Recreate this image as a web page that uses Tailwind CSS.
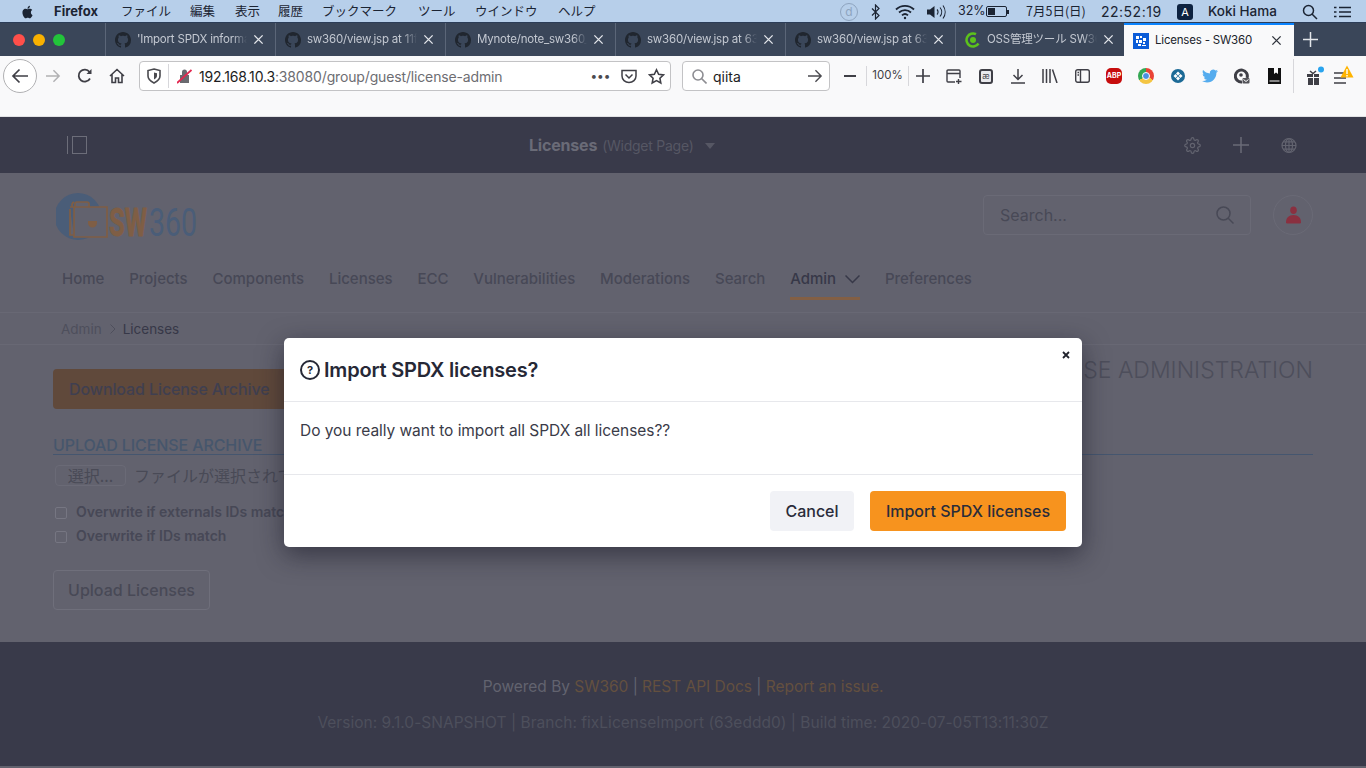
<!DOCTYPE html>
<html lang="ja">
  <head>
    <meta charset="UTF-8" />
    <title>Licenses - SW360</title>
    <script src="https://cdn.jsdelivr.net/npm/@tailwindcss/browser@4"></script>
  </head>
  <body class="bg-[#62626e]">
    <svg class="hidden">
      <symbol id="gh" viewBox="0 0 16 16"><path fill="currentColor" d="M8 0C3.58 0 0 3.58 0 8c0 3.54 2.29 6.53 5.47 7.59.4.07.55-.17.55-.38 0-.19-.01-.82-.01-1.49-2.01.37-2.53-.49-2.69-.94-.09-.23-.48-.94-.82-1.13-.28-.15-.68-.52-.01-.53.63-.01 1.08.58 1.23.82.72 1.21 1.87.87 2.33.66.07-.52.28-.87.51-1.07-1.78-.2-3.64-.89-3.64-3.95 0-.87.31-1.59.82-2.15-.08-.2-.36-1.02.08-2.12 0 0 .67-.21 2.2.82.64-.18 1.32-.27 2-.27.68 0 1.36.09 2 .27 1.53-1.04 2.2-.82 2.2-.82.44 1.1.16 1.92.08 2.12.51.56.82 1.27.82 2.15 0 3.07-1.87 3.75-3.65 3.95.29.25.54.73.54 1.48 0 1.07-.01 1.93-.01 2.2 0 .21.15.46.55.38A8.013 8.013 0 0016 8c0-4.42-3.58-8-8-8z"/></symbol>
      <symbol id="x" viewBox="0 0 12 12"><path d="M1.5 1.5l9 9M10.5 1.5l-9 9" stroke="currentColor" stroke-width="1.5" fill="none"/></symbol>
    </svg>

    <div class="relative w-[1366px] h-[768px] overflow-hidden flex flex-col [font-family:Inter,sans-serif]">
      <!-- mac menu bar -->
      <div class="h-[23px] shrink-0 pt-px bg-[#b7cfea] border-b border-[#2c3d58] flex items-center text-[#1b2433] text-[12.5px] [font-family:'Noto_Sans_CJK_JP',sans-serif]">
        <svg class="ml-[20px] w-[15px] h-[16px] text-[#1b2433]" viewBox="0 0 24 24"><path fill="currentColor" d="M18.71 19.5c-.83 1.24-1.71 2.45-3.05 2.47-1.34.03-1.77-.79-3.29-.79-1.53 0-2 .77-3.27.82-1.31.05-2.3-1.32-3.14-2.53C4.25 17 2.94 12.45 4.7 9.39c.87-1.52 2.43-2.48 4.12-2.51 1.28-.02 2.5.87 3.29.87.78 0 2.26-1.07 3.81-.91.65.03 2.47.26 3.64 1.98-.09.06-2.17 1.28-2.15 3.81.03 3.02 2.65 4.03 2.68 4.04-.03.07-.42 1.44-1.38 2.83M13 3.5c.73-.83 1.94-1.46 2.94-1.5.13 1.17-.34 2.35-1.04 3.19-.69.85-1.83 1.51-2.95 1.42-.15-1.15.41-2.35 1.05-3.11z"/></svg>
        <span class="ml-[19px] w-[67px] font-bold text-[13px] [font-family:Inter,sans-serif]">Firefox</span>
        <span class="w-[69px]">ファイル</span>
        <span class="w-[45px]">編集</span>
        <span class="w-[43px]">表示</span>
        <span class="w-[44px]">履歴</span>
        <span class="w-[96px]">ブックマーク</span>
        <span class="w-[57px]">ツール</span>
        <span class="w-[83px]">ウインドウ</span>
        <span class="w-[60px]">ヘルプ</span>
        <div class="ml-[222px] w-[18px] h-[18px] rounded-full border border-[#8ea4bf] text-[#8ea4bf] text-[12px] leading-[15px] text-center [font-family:Inter,sans-serif]">d</div>
        <svg class="ml-[13px] w-[10px] h-[16px]" viewBox="0 0 10 16"><path d="M1 4.5l7 7-3.5 3.5V1L8 4.5l-7 7" fill="none" stroke="#1b2433" stroke-width="1.2"/></svg>
        <svg class="ml-[14px] w-[20px] h-[16px]" viewBox="0 0 20 16" fill="none" stroke="#1b2433" stroke-width="1.8"><path d="M1 5.5a13 13 0 0118 0M4 8.5a9 9 0 0112 0M7 11.3a4.5 4.5 0 016 0"/><circle cx="10" cy="14" r="1.2" fill="#1b2433" stroke="none"/></svg>
        <svg class="ml-[11px] w-[21px] h-[16px]" viewBox="0 0 21 16" fill="none" stroke="#1b2433" stroke-width="1.1"><path d="M1 5.5h3L8.5 2v12L4 10.5H1z" fill="#1b2433" stroke="none"/><path d="M11 5.5a3.5 3.5 0 010 5M14 3.5a7 7 0 010 9M17 1.5a11 11 0 010 13"/></svg>
        <span class="ml-[11px] w-[28px] text-[12.5px] [font-family:Inter,sans-serif]">32%</span>
        <div class="w-[21px] h-[11px] border border-[#1b2433] rounded-[2px] p-px"><div class="w-[7px] h-full bg-[#1b2433]"></div></div>
        <div class="w-[2px] h-[4px] bg-[#1b2433]"></div>
        <span class="ml-[17px] w-[75px] whitespace-nowrap">7月5日(日)</span>
        <span class="w-[76px] text-[14px] tracking-[0.5px] whitespace-nowrap [font-family:Inter,sans-serif]">22:52:19</span>
        <div class="w-[16px] h-[16px] rounded-[3px] bg-[#0d2240] text-white text-[11px] leading-[16px] text-center [font-family:Inter,sans-serif]">A</div>
        <span class="ml-[15px] w-[84px] text-[13.5px] font-medium whitespace-nowrap [font-family:Inter,sans-serif]">Koki Hama</span>
        <svg class="ml-[10px] w-[16px] h-[16px]" viewBox="0 0 16 16" fill="none" stroke="#1b2433" stroke-width="1.5"><circle cx="6.5" cy="6.5" r="5"/><path d="M10 10l5 5"/></svg>
        <svg class="ml-[16px] w-[17px] h-[12px]" viewBox="0 0 17 12" stroke="#1b2433" stroke-width="1.6"><path d="M0 1.5h2.5M0 6h2.5M0 10.5h2.5M5 1.5h12M5 6h12M5 10.5h12"/></svg>
      </div>

      <!-- tab strip -->
      <div class="h-[33px] shrink-0 bg-[#3a4659] flex text-[11.5px] tracking-[-0.2px] text-[#c3c8d1]">
        <div class="w-[105px] flex items-center gap-[8px] pl-[13px] rounded-tl-[5px]">
          <span class="w-[12px] h-[12px] rounded-full bg-[#ff4f4a]"></span>
          <span class="w-[12px] h-[12px] rounded-full bg-[#f9b100]"></span>
          <span class="w-[12px] h-[12px] rounded-full bg-[#22c43a]"></span>
        </div>
        <div class="w-[170px] border-l border-[#5b6678] flex items-center pl-[9px]">
          <svg class="w-[16px] h-[16px] text-[#20262f]"><use href="#gh" /></svg>
          <span class="ml-[6px] pt-px w-[110px] overflow-hidden whitespace-nowrap [mask-image:linear-gradient(to_left,transparent,black_14px)]">'Import SPDX information</span>
          <svg class="ml-[6px] w-[11px] h-[11px] text-[#e3e6ea]"><use href="#x" /></svg>
        </div>
        <div class="w-[170px] border-l border-[#5b6678] flex items-center pl-[9px]">
          <svg class="w-[16px] h-[16px] text-[#20262f]"><use href="#gh" /></svg>
          <span class="ml-[6px] pt-px w-[110px] overflow-hidden whitespace-nowrap [mask-image:linear-gradient(to_left,transparent,black_14px)]">sw360/view.jsp at 11fa2</span>
          <svg class="ml-[6px] w-[11px] h-[11px] text-[#e3e6ea]"><use href="#x" /></svg>
        </div>
        <div class="w-[170px] border-l border-[#5b6678] flex items-center pl-[9px]">
          <svg class="w-[16px] h-[16px] text-[#20262f]"><use href="#gh" /></svg>
          <span class="ml-[6px] pt-px w-[110px] overflow-hidden whitespace-nowrap [mask-image:linear-gradient(to_left,transparent,black_14px)]">Mynote/note_sw360_import</span>
          <svg class="ml-[6px] w-[11px] h-[11px] text-[#e3e6ea]"><use href="#x" /></svg>
        </div>
        <div class="w-[170px] border-l border-[#5b6678] flex items-center pl-[9px]">
          <svg class="w-[16px] h-[16px] text-[#20262f]"><use href="#gh" /></svg>
          <span class="ml-[6px] pt-px w-[110px] overflow-hidden whitespace-nowrap [mask-image:linear-gradient(to_left,transparent,black_14px)]">sw360/view.jsp at 63eddd0</span>
          <svg class="ml-[6px] w-[11px] h-[11px] text-[#e3e6ea]"><use href="#x" /></svg>
        </div>
        <div class="w-[170px] border-l border-[#5b6678] flex items-center pl-[9px]">
          <svg class="w-[16px] h-[16px] text-[#20262f]"><use href="#gh" /></svg>
          <span class="ml-[6px] pt-px w-[110px] overflow-hidden whitespace-nowrap [mask-image:linear-gradient(to_left,transparent,black_14px)]">sw360/view.jsp at 63eddd0</span>
          <svg class="ml-[6px] w-[11px] h-[11px] text-[#e3e6ea]"><use href="#x" /></svg>
        </div>
        <div class="w-[169px] border-l border-[#5b6678] flex items-center pl-[9px]">
          <svg class="w-[16px] h-[16px]" viewBox="0 0 16 16" fill="none"><path d="M13.5 11.5A6.5 6.5 0 1111 2.2" stroke="#5cc21c" stroke-width="2.5"/><circle cx="8" cy="8" r="3" fill="#5cc21c"/></svg>
          <span class="ml-[6px] w-[110px] overflow-hidden whitespace-nowrap [font-family:Inter,'Noto_Sans_CJK_JP',sans-serif] [mask-image:linear-gradient(to_left,transparent,black_14px)]">OSS管理ツール SW360とは</span>
          <svg class="ml-[6px] w-[11px] h-[11px] text-[#e3e6ea]"><use href="#x" /></svg>
        </div>
        <div class="w-[170px] bg-[#f9f9fa] border-t-2 border-[#0a84ff] flex items-center pl-[9px] text-[#20232b]">
          <svg class="w-[16px] h-[16px]" viewBox="0 0 16 16"><rect width="16" height="16" fill="#0b5cd8"/><path d="M3 3h3v3H3zM7 3h2v2H7zM10 5h3v3h-3zM3 7h2v3H3zM6 7h3v3H6zM10 9h2v2h-2zM5 11h3v2H5zM9 12h4v1H9z" fill="#fff"/></svg>
          <span class="ml-[6px] w-[110px] whitespace-nowrap">Licenses - SW360</span>
          <svg class="ml-[6px] w-[11px] h-[11px] text-[#30343c]"><use href="#x" /></svg>
        </div>
        <div class="w-[32px] flex items-center justify-center">
          <svg class="w-[15px] h-[15px]" viewBox="0 0 15 15"><path d="M7.5 0v15M0 7.5h15" stroke="#e3e6ea" stroke-width="1.5"/></svg>
        </div>
      </div>

      <!-- toolbar -->
      <div class="h-[61px] shrink-0 bg-[#f9f9fa] border-b border-[#e2e2e4] text-[#3f3f46]">
        <div class="h-[40px] flex items-center">
          <div class="ml-[3px] w-[34px] h-[34px] rounded-full bg-white border border-[#b1b1b3] flex items-center justify-center">
            <svg class="w-[18px] h-[16px]" viewBox="0 0 18 16" fill="none" stroke="#3f3f46" stroke-width="1.7"><path d="M17 8H2M8.5 1.5L2 8l6.5 6.5"/></svg>
          </div>
          <div class="w-[32px] flex justify-center">
            <svg class="w-[16px] h-[14px]" viewBox="0 0 18 16" fill="none" stroke="#b1b1b3" stroke-width="1.7"><path d="M1 8h15M9.5 1.5L16 8l-6.5 6.5"/></svg>
          </div>
          <div class="w-[32px] flex justify-center">
            <svg class="w-[16px] h-[16px]" viewBox="0 0 16 16" fill="none" stroke="#3f3f46" stroke-width="1.8"><path d="M13 10.5A6 6 0 1112.5 4"/><path d="M14.5 1v5h-5" fill="#3f3f46" stroke="none"/></svg>
          </div>
          <div class="w-[32px] flex justify-center">
            <svg class="w-[16px] h-[16px]" viewBox="0 0 16 16" fill="none" stroke="#3f3f46" stroke-width="1.6"><path d="M1 8l7-6.5L15 8M3 6.5V14.5h3.5V10h3v4.5H13V6.5"/></svg>
          </div>
          <div class="ml-[6px] w-[532px] h-[30px] bg-white border border-[#c3c3c5] rounded-[4px] flex items-center text-[14px] tracking-[-0.15px]">
            <svg class="ml-[7px] w-[14px] h-[16px]" viewBox="0 0 14 16" fill="none" stroke="#4a4a4f" stroke-width="1.6"><path d="M7 1l6 1.5V8c0 3-3 5.5-6 7-3-1.5-6-4-6-7V2.5z"/><path d="M7 4.5l3 .8V8c0 1.5-1.5 2.8-3 3.5z" fill="#4a4a4f" stroke="none"/></svg>
            <div class="ml-[7px] w-px h-[24px] bg-[#d7d7db]"></div>
            <svg class="ml-[8px] w-[15px] h-[16px]" viewBox="0 0 15 16"><path d="M3 7h9v8H3zM5 7V4a2.5 2.5 0 015 0v3" fill="#6a6a6f" /><path d="M0 15L14.5 2" stroke="#e22850" stroke-width="1.8"/></svg>
            <span class="ml-[7px] text-[#1d1d22]">192.168.10.3</span><span class="text-[#6d6d72]">:38080/group/guest/license-admin</span>
            <span class="ml-auto text-[#4a4a4f] font-bold text-[12px] tracking-[1px]">•••</span>
            <svg class="ml-[10px] w-[16px] h-[15px]" viewBox="0 0 16 15" fill="none" stroke="#3f3f46" stroke-width="1.5"><path d="M1 1.5h14V7a7 6.5 0 01-14 0z"/><path d="M4.5 5.5L8 9l3.5-3.5"/></svg>
            <svg class="ml-[11px] mr-[5px] w-[17px] h-[17px]" viewBox="0 0 24 24" fill="none" stroke="#3f3f46" stroke-width="2.2"><path d="M12 2.5l3 6.3 6.8.9-5 4.7 1.3 6.8-6.1-3.3-6.1 3.3 1.3-6.8-5-4.7 6.8-.9z"/></svg>
          </div>
          <div class="ml-[11px] w-[148px] h-[30px] bg-white border border-[#c3c3c5] rounded-[4px] flex items-center text-[14px] text-[#1d1d22]">
            <svg class="ml-[9px] w-[15px] h-[15px]" viewBox="0 0 15 15" fill="none" stroke="#8d8d92" stroke-width="1.6"><circle cx="6" cy="6" r="5"/><path d="M9.5 9.5L14.5 14.5"/></svg>
            <span class="ml-[6px]">qiita</span>
            <svg class="ml-auto mr-[6px] w-[16px] h-[14px]" viewBox="0 0 18 16" fill="none" stroke="#4a4a4f" stroke-width="1.6"><path d="M1 8h15M9.5 1.5L16 8l-6.5 6.5"/></svg>
          </div>
          <div class="w-[36px] pl-[14px]">
            <div class="w-[12px] h-[2px] bg-[#3f3f46]"></div>
          </div>
          <div class="w-px h-[20px] bg-[#d7d7db]"></div>
          <span class="w-[41px] text-center text-[11.5px]">100%</span>
          <div class="w-px h-[20px] bg-[#d7d7db]"></div>
          <div class="w-[27px] flex justify-center">
            <svg class="w-[14px] h-[14px]" viewBox="0 0 14 14"><path d="M7 0v14M0 7h14" stroke="#3f3f46" stroke-width="1.7"/></svg>
          </div>
          <div class="ml-px w-[33px] flex justify-center">
            <svg class="w-[16px] h-[15px]" viewBox="0 0 16 15" fill="none" stroke="#3f3f46" stroke-width="1.4"><path d="M9 13H2a1 1 0 01-1-1V2a1 1 0 011-1h11a1 1 0 011 1v7M1 4.5h13M12.5 10v5M10 12.5h5.5"/></svg>
          </div>
          <div class="w-[32px] flex justify-center">
            <div class="w-[14px] h-[15px] rounded-[3px] bg-[#e9e9ec] border-[2px] border-[#3f3f46] text-[8px] leading-[10px] text-center text-[#3f3f46]">æ</div>
          </div>
          <div class="w-[32px] flex justify-center">
            <svg class="w-[14px] h-[15px]" viewBox="0 0 14 15" fill="none" stroke="#3f3f46" stroke-width="1.5"><path d="M7 0v10M2.5 6L7 10.5 11.5 6M0 14h14"/></svg>
          </div>
          <div class="w-[32px] flex justify-center">
            <svg class="w-[16px] h-[14px]" viewBox="0 0 16 14" fill="none" stroke="#3f3f46" stroke-width="1.5"><path d="M1 0v14M4.5 0v14M8 0v14M10.5.5l4.5 13.5"/></svg>
          </div>
          <div class="w-[32px] flex justify-center">
            <svg class="w-[15px] h-[14px]" viewBox="0 0 15 14" fill="none" stroke="#3f3f46" stroke-width="1.4"><rect x=".7" y=".7" width="13.6" height="12.6" rx="2"/><path d="M5.5 1v12M2.5 3.5h1.5M2.5 6h1.5" /></svg>
          </div>
          <div class="w-[32px] flex justify-center">
            <div class="w-[16px] h-[16px] rounded-[5px] bg-[#c70d0d] text-white text-[7px] font-bold leading-[16px] text-center">ABP</div>
          </div>
          <div class="w-[32px] flex justify-center">
            <div class="w-[16px] h-[16px] rounded-full bg-[conic-gradient(#ea4335_0_33%,#f4c542_33%_66%,#34a853_66%)] flex items-center justify-center">
              <div class="w-[8px] h-[8px] rounded-full bg-[#4a90e2] border border-white"></div>
            </div>
          </div>
          <div class="w-[32px] flex justify-center">
            <svg class="w-[14px] h-[14px]" viewBox="0 0 14 14"><circle cx="7" cy="7" r="7" fill="#1c6a96"/><path d="M7 2.5l2 2-2 2-2-2zM7 7.5l2 2-2 2-2-2zM2.5 7l2-2 2 2-2 2zM7.5 7l2-2 2 2-2 2z" fill="#fff"/></svg>
          </div>
          <div class="w-[32px] flex justify-center">
            <svg class="w-[16px] h-[16px]" viewBox="0 0 24 24"><path fill="#55acee" d="M23.953 4.57a10 10 0 01-2.825.775 4.958 4.958 0 002.163-2.723c-.951.555-2.005.959-3.127 1.184a4.92 4.92 0 00-8.384 4.482C7.69 8.095 4.067 6.13 1.64 3.162a4.822 4.822 0 00-.666 2.475c0 1.71.87 3.213 2.188 4.096a4.904 4.904 0 01-2.228-.616v.06a4.923 4.923 0 003.946 4.827 4.996 4.996 0 01-2.212.085 4.936 4.936 0 004.604 3.417 9.867 9.867 0 01-6.102 2.105c-.39 0-.779-.023-1.17-.067a13.995 13.995 0 007.557 2.209c9.053 0 13.998-7.496 13.998-13.985 0-.21 0-.42-.015-.63A9.935 9.935 0 0024 4.59z"/></svg>
          </div>
          <div class="w-[32px] flex justify-center">
            <svg class="w-[16px] h-[16px]" viewBox="0 0 16 16"><path d="M13 10A6 6 0 1 0 8 14" fill="none" stroke="#3f3f46" stroke-width="3"/><circle cx="7" cy="7" r="1.8" fill="#3f3f46"/><rect x="8.5" y="10" width="7" height="5.5" rx="1" fill="#55555a"/><path d="M9.5 11.5l2.5 2 2.5-2" stroke="#fff" fill="none"/></svg>
          </div>
          <div class="w-[32px] flex justify-center">
            <svg class="w-[13px] h-[16px]" viewBox="0 0 13 16"><path d="M0 0h13v16H0z" fill="#111"/><path d="M6 0h4v6L8 4.5 6 6zM1.5 12.5h10v1h-10z" fill="#fafafa"/></svg>
          </div>
          <div class="ml-[3px] w-px h-[34px] bg-[#d7d7db]"></div>
          <div class="ml-[6px] w-[32px] flex justify-center">
            <svg class="w-[20px] h-[20px]" viewBox="0 0 20 20"><path d="M1 8h6v3H1zM8 8h5v3H8zM2 12h5v7H2zM8 12h5v7H8z" fill="#3f3f46"/><path d="M4 5l3 2.5L10 5" stroke="#3f3f46" fill="none" stroke-width="1.5"/><circle cx="15" cy="3.5" r="3" fill="#2aa4ee"/></svg>
          </div>
          <svg class="ml-[2px] w-[20px] h-[22px]" viewBox="0 0 20 22"><path d="M0 8h12M0 13h12M0 18h12" stroke="#3f3f46" stroke-width="1.6"/><path d="M13 .5l6.5 12h-13z" fill="#ffb400"/><path d="M13 4v5M13 10v1.5" stroke="#fff" stroke-width="1.4"/></svg>
        </div>
      </div>

      <!-- page, backdrop colours already applied -->
      <div class="h-[56px] shrink-0 bg-[#393a4a] flex items-center text-[#62636f]">
        <div class="ml-[67px] flex gap-[4px]">
          <div class="w-px h-[18px] bg-[#6c6d79]"></div>
          <div class="w-[15px] h-[18px] border border-[#6c6d79]"></div>
        </div>
        <div class="ml-[442px] text-[16px] tracking-[-0.2px] font-bold text-[#6a6b77] whitespace-nowrap">Licenses</div>
        <div class="ml-[5px] text-[14px] tracking-[-0.25px] text-[#565764] whitespace-nowrap">(Widget Page)</div>
        <div class="ml-[11px] mt-[2px] w-0 h-0 border-x-[5px] border-x-transparent border-t-[6px] border-t-[#565764]"></div>
        <svg class="ml-[469px] w-[17px] h-[17px]" viewBox="0 0 24 24" fill="none" stroke="#62636f" stroke-width="1.7"><circle cx="12" cy="12" r="3"/><path d="M19.4 15a1.65 1.65 0 0 0 .33 1.82l.06.06a2 2 0 0 1 0 2.83 2 2 0 0 1-2.83 0l-.06-.06a1.65 1.65 0 0 0-1.82-.33 1.65 1.65 0 0 0-1 1.51V21a2 2 0 0 1-2 2 2 2 0 0 1-2-2v-.09A1.65 1.65 0 0 0 9 19.4a1.65 1.65 0 0 0-1.82.33l-.06.06a2 2 0 0 1-2.83 0 2 2 0 0 1 0-2.83l.06-.06a1.65 1.65 0 0 0 .33-1.82 1.65 1.65 0 0 0-1.51-1H3a2 2 0 0 1-2-2 2 2 0 0 1 2-2h.09A1.65 1.65 0 0 0 4.6 9a1.65 1.65 0 0 0-.33-1.82l-.06-.06a2 2 0 0 1 0-2.83 2 2 0 0 1 2.83 0l.06.06a1.65 1.65 0 0 0 1.82.33H9a1.65 1.65 0 0 0 1-1.51V3a2 2 0 0 1 2-2 2 2 0 0 1 2 2v.09a1.65 1.65 0 0 0 1 1.51 1.65 1.65 0 0 0 1.82-.33l.06-.06a2 2 0 0 1 2.83 0 2 2 0 0 1 0 2.83l-.06.06a1.65 1.65 0 0 0-.33 1.82V9a1.65 1.65 0 0 0 1.51 1H21a2 2 0 0 1 2 2 2 2 0 0 1-2 2h-.09a1.65 1.65 0 0 0-1.51 1z"/></svg>
        <svg class="ml-[32px] w-[16px] h-[16px]" viewBox="0 0 16 16"><path d="M8 0v16M0 8h16" stroke="#6a6b77" stroke-width="1.5"/></svg>
        <svg class="ml-[32px] w-[16px] h-[17px]" viewBox="0 0 16 17" fill="none" stroke="#62636f" stroke-width="1.2"><circle cx="8" cy="8.5" r="7"/><ellipse cx="8" cy="8.5" rx="3.5" ry="7"/><path d="M8 1v15M1 8.5h14M2 4.8h12M2 12.2h12"/></svg>
      </div>

      <div class="flex-1 flex flex-col">
        <div class="h-[140px] shrink-0 border-b border-[#686874] relative">
          <div class="pt-[12px] pl-[56px] pr-[53px] flex items-start">
            <svg class="w-[142px] h-[58px]" viewBox="0 0 142 58">
              <circle cx="22" cy="31.5" r="23.5" fill="#4a5d78"/>
              <path d="M14 22h37v30H18V22M14 24v26h4M19 22v-3a2 2 0 012-2h10a2 2 0 012 2v3M16 22v-2a3 3 0 012-3" fill="#62626e" stroke="#7f5e45" stroke-width="1.7"/>
              <path d="M32 36h9v2a4.5 4.5 0 01-9 0z" fill="#7f5e45"/>
              <text transform="translate(53 51) scale(.67 1)" font-family="Roboto" font-weight="700" font-size="38" fill="#7f5e45" stroke="#7f5e45" stroke-width=".8">SW</text>
              <text transform="translate(93 51) scale(.75 1)" font-family="Roboto" font-size="38" fill="#4a5d78">360</text>
            </svg>
            <div class="ml-auto flex items-center gap-[22px] pr-0">
              <div class="mt-[10px] w-[268px] h-[40px] border border-[#6a6a76] rounded-[4px] flex items-center pl-[16px] pr-[16px] text-[16px] text-[#484956]">
                Search...
                <svg class="ml-auto w-[18px] h-[18px]" viewBox="0 0 18 18" fill="none" stroke="#484956" stroke-width="1.5"><circle cx="7.5" cy="7.5" r="6.5"/><path d="M12 12l5.5 5.5"/></svg>
              </div>
              <div class="mt-[10px] w-[40px] h-[40px] rounded-full border border-[#6a6a76] flex items-center justify-center">
                <svg class="w-[15px] h-[18px]" viewBox="0 0 16 18"><ellipse cx="8" cy="4" rx="3.5" ry="4" fill="#8a3040"/><path d="M0 17c0-5 3-8 8-8s8 3 8 8c0 .5-.5 1-1 1H1c-.5 0-1-.5-1-1z" fill="#8a3040"/></svg>
              </div>
            </div>
          </div>
          <nav class="mt-[25px] pl-[62px] flex gap-[24.8px] text-[15px] font-medium text-[#474856] whitespace-nowrap">
            <span>Home</span>
            <span>Projects</span>
            <span>Components</span>
            <span>Licenses</span>
            <span>ECC</span>
            <span>Vulnerabilities</span>
            <span>Moderations</span>
            <span>Search</span>
            <span class="relative w-[70px] text-[#373848] flex items-center">
              Admin
              <svg class="ml-[9px] w-[15px] h-[9px]" viewBox="0 0 15 9" fill="none" stroke="#373848" stroke-width="1.5"><path d="M.5.5l7 7 7-7"/></svg>
              <span class="absolute left-0 right-0 top-[29px] h-[3px] bg-[#835f44]"></span>
            </span>
            <span>Preferences</span>
          </nav>
        </div>

        <div class="h-[32px] shrink-0 pt-px border-b border-[#686874] pl-[61px] flex items-center text-[13.5px] text-[#4e4f5c]">
          Admin
          <svg class="ml-[8px] w-[6px] h-[10px]" viewBox="0 0 6 10" fill="none" stroke="#4e4f5c"><path d="M.5.5L5 5 .5 9.5"/></svg>
          <span class="ml-[7px] text-[#373848]">Licenses</span>
        </div>

        <div class="flex-1 pl-[53px] pr-[53px] pt-[24px]">
          <div class="flex items-start justify-between">
            <div class="w-[240px] h-[40px] rounded-[4px] bg-[#60493b] pl-[16px] flex items-center text-[16px] tracking-[-0.1px] font-medium text-[#3f3f50] whitespace-nowrap overflow-hidden">Download License Archive</div>
            <div class="-mt-[15px] text-[23px] leading-[32px] font-light text-[#4d4e5b] whitespace-nowrap">LICENSE ADMINISTRATION</div>
          </div>
          <div class="mt-[26px] h-[20px] border-b border-[#45566f] text-[16px] leading-[21px] tracking-[-0.1px] font-medium text-[#46566c]">UPLOAD LICENSE ARCHIVE</div>
          <div class="mt-[10px] pl-[2px] h-[21px] flex items-start text-[16px] text-[#494a56] [font-family:'Noto_Sans_CJK_JP',sans-serif]">
            <div class="w-[71px] h-[21px] rounded-[4px] border border-[#6a6a76] text-center leading-[19px]">選択...</div>
            <span class="ml-[8px] leading-[20px] whitespace-nowrap">ファイルが選択されていません。</span>
          </div>
          <div class="mt-[18px] pl-[2px] flex flex-col gap-[8px] text-[14px] font-semibold text-[#474856]">
            <div class="flex h-[16px] leading-[16px] whitespace-nowrap">
              <span class="mt-[3px] w-[12px] h-[12px] rounded-[2px] border border-[#767682]"></span>
              <span class="ml-[9px]">Overwrite if externals IDs match</span>
            </div>
            <div class="flex h-[16px] leading-[16px] whitespace-nowrap">
              <span class="mt-[3px] w-[12px] h-[12px] rounded-[2px] border border-[#767682]"></span>
              <span class="ml-[9px]">Overwrite if IDs match</span>
            </div>
          </div>
          <div class="mt-[26px] w-[157px] h-[40px] rounded-[4px] border border-[#6f6f7b] flex items-center justify-center text-[16px] font-medium text-[#484956]">Upload Licenses</div>
        </div>
      </div>

      <footer class="h-[124px] shrink-0 mb-[2px] bg-[#393a4a] flex flex-col items-center text-[15.5px] whitespace-nowrap">
        <div class="mt-[33px] tracking-[-0.03px] text-[#62636f]">Powered By <span class="text-[#64503f]">SW360</span> | <span class="text-[#64503f]">REST API Docs</span> | <span class="text-[#64503f]">Report an issue.</span></div>
        <div class="mt-[13px] tracking-[0.02px] text-[#4d4f5c]">Version: 9.1.0-SNAPSHOT | Branch: fixLicenseImport (63eddd0) | Build time: 2020-07-05T13:11:30Z</div>
      </footer>

      <!-- modal -->
      <div class="absolute inset-0 pt-[338px] flex justify-center items-start">
        <div class="relative w-[798px] h-[209px] bg-white rounded-[5px] shadow-[0_8px_26px_rgba(20,20,35,0.55)] flex flex-col text-[#2a2c3a]">
          <div class="h-[64px] shrink-0 border-b border-[#e7e8ec] pl-[16px] flex items-center gap-[4px]">
            <svg class="w-[20px] h-[20px]" viewBox="0 0 20 20" fill="none"><circle cx="10" cy="10" r="9" stroke="#262836" stroke-width="2"/><text x="10" y="14" text-anchor="middle" font-family="Inter" font-size="11" font-weight="700" fill="#262836">?</text></svg>
            <h2 class="text-[20px] tracking-[-0.2px] font-semibold text-[#262836]">Import SPDX licenses?</h2>
          </div>
          <div class="h-[73px] shrink-0 border-b border-[#e7e8ec] pl-[16px] pt-[17px] text-[15.5px] tracking-[-0.05px] leading-[23px] text-[#3a3b48]">Do you really want to import all SPDX all licenses??</div>
          <div class="flex-1 flex justify-end items-start gap-[16px] pt-[16px] pr-[16px] text-[16px] font-medium">
            <div class="w-[84px] h-[40px] rounded-[4px] bg-[#f1f2f6] flex items-center justify-center">Cancel</div>
            <div class="w-[196px] h-[40px] rounded-[4px] bg-[#f7931e] flex items-center justify-center">Import SPDX licenses</div>
          </div>
          <svg class="absolute top-[13px] right-[12px] w-[8px] h-[8px]" viewBox="0 0 8 8"><path d="M1 1l6 6M7 1L1 7" stroke="#20222c" stroke-width="1.8"/></svg>
        </div>
      </div>
    </div>
  </body>
</html>
